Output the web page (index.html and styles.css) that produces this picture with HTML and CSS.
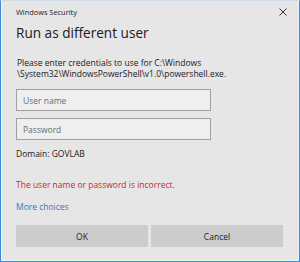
FILE: index.html
```html
<!DOCTYPE html>
<html>
<head>
<meta charset="utf-8">
<link rel="stylesheet" href="styles.css">
</head>
<body>
<div class="window">
  <div class="titlebar">
    <span class="title">Windows Security</span>
    <svg class="close" width="8" height="8" viewBox="0 0 8 8"><path d="M0.5 0.5 L7.5 7.5 M7.5 0.5 L0.5 7.5" stroke="#333" stroke-width="1" fill="none"/></svg>
  </div>
  <div class="content">
    <h1 class="heading">Run as different user</h1>
    <p class="desc">Please enter credentials to use for C:\Windows<br>\System32\WindowsPowerShell\v1.0\powershell.exe.</p>
    <div class="field">User name</div>
    <div class="field">Password</div>
    <p class="domain">Domain: GOVLAB</p>
    <p class="error">The user name or password is incorrect.</p>
    <p class="more">More choices</p>
    <div class="buttons">
      <div class="btn">OK</div>
      <div class="btn">Cancel</div>
    </div>
  </div>
</div>
</body>
</html>
```
FILE: styles.css
```css
html, body {
  margin: 0;
  padding: 0;
  background: #e6e6e6;
}
.window {
  width: 300px;
  height: 262px;
  box-sizing: border-box;
  border: 1px solid #3a8ad8;
  border-top-color: #cfdcea;
  background: #e6e6e6;
  box-shadow: inset 1px 0 0 #f2f2f2, inset -1px -1px 0 #f2f2f2;
  font-family: "Open Sans", "Noto Sans", sans-serif;
  color: #1a1a1a;
}
.titlebar {
  height: 22px;
  display: flex;
  align-items: center;
  justify-content: space-between;
  padding: 0 12px 0 15px;
}
.title {
  font-size: 7.4px;
  color: #222;
}
.close {
  display: block;
}
.content {
  padding: 0 15px;
}
.heading {
  margin: 2px 0 0;
  font-size: 13.6px;
  font-weight: normal;
  line-height: 16px;
}
.desc {
  margin: 16px 0 0 1px;
  font-size: 8.5px;
  line-height: 11px;
}
.field {
  margin-top: 10px;
  width: 195px;
  height: 22px;
  box-sizing: border-box;
  border: 1px solid #a0a0a0;
  background: #efefef;
  font-size: 8.5px;
  color: #6d6d6d;
  padding-left: 6px;
  display: flex;
  align-items: center;
}
.field + .field {
  margin-top: 7px;
}
.domain {
  margin: 8px 0 0;
  font-size: 8.5px;
  line-height: 11px;
}
.error {
  margin: 20px 0 0;
  font-size: 8.5px;
  line-height: 11px;
  color: #c8282e;
}
.more {
  margin: 11px 0 0;
  font-size: 8.5px;
  line-height: 11px;
  color: #2a7ac4;
}
.buttons {
  margin-top: 13px;
  display: flex;
  gap: 3px;
  width: 267px;
}
.btn {
  flex: 1;
  height: 22px;
  background: #cccccc;
  display: flex;
  align-items: center;
  justify-content: center;
  font-size: 8.5px;
  color: #222;
}
```
